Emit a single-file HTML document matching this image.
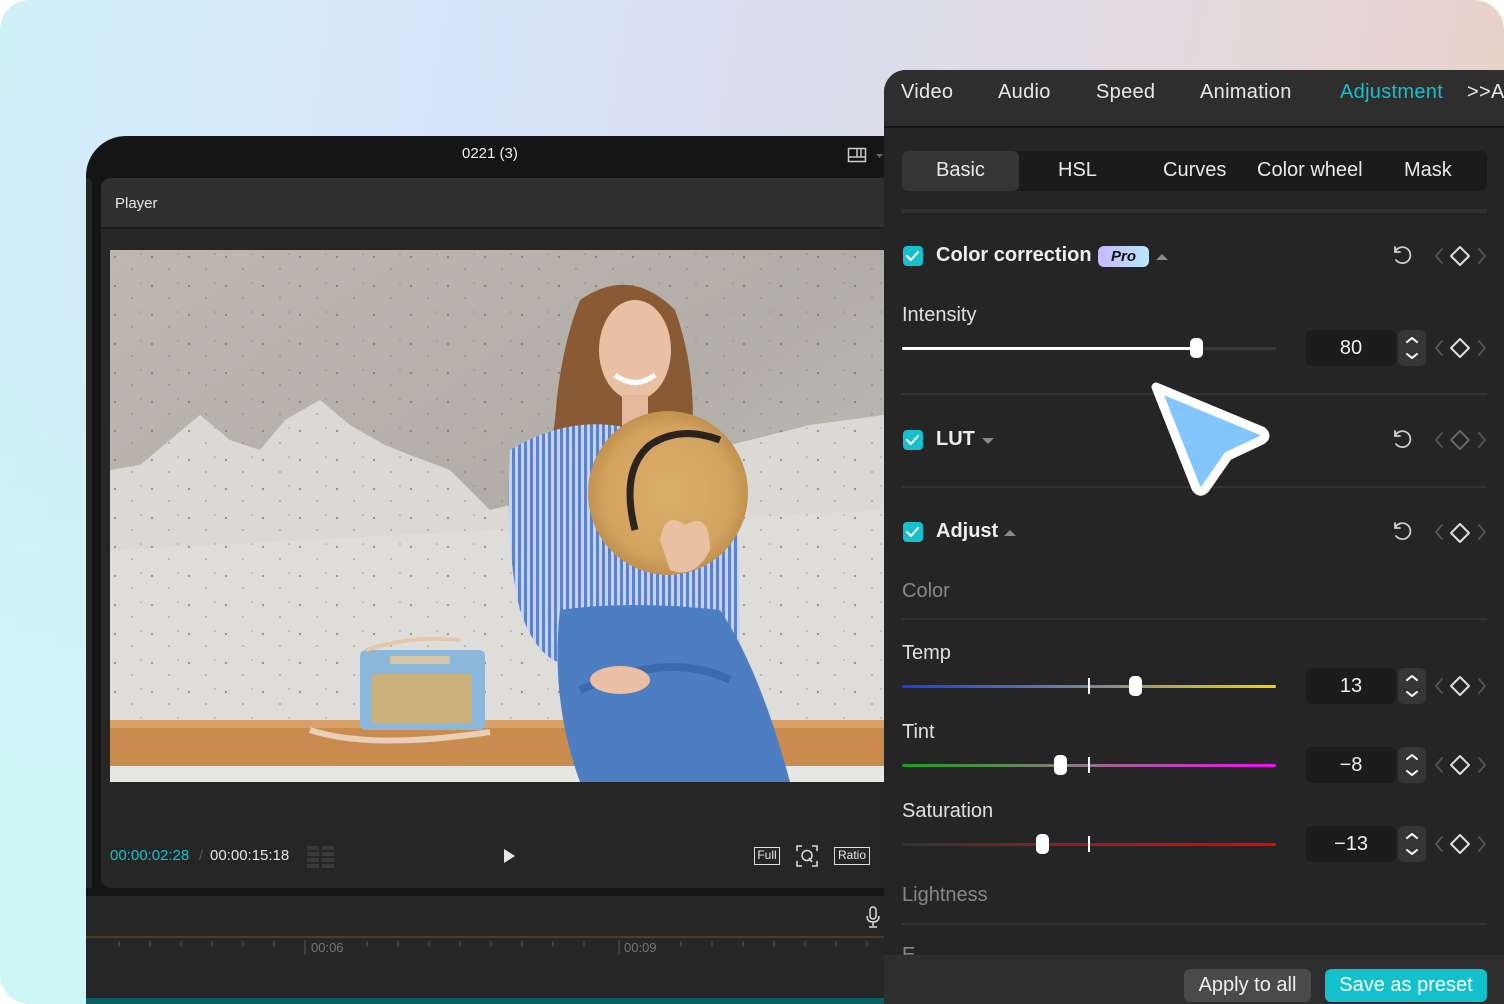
<!DOCTYPE html>
<html><head><meta charset="utf-8"><style>
*{margin:0;padding:0;box-sizing:border-box}
body{width:1504px;height:1004px;background:#fff;overflow:hidden;font-family:"Liberation Sans","DejaVu Sans",sans-serif;position:relative}
.a{position:absolute}
.bg{left:0;top:0;width:1504px;height:1004px;border-radius:30px;background:linear-gradient(100deg,#d0f0f8 0%,#d6e4fb 28%,#dcdce9 55%,#e6d6d6 80%,#ecccbd 100%);overflow:hidden}
.bg2{left:0;top:300px;width:600px;height:704px;background:linear-gradient(to bottom,rgba(205,245,247,0) 0%,rgba(205,246,247,1) 70%)}
.t{color:#e8e8e8;white-space:nowrap}
.tab{font-size:20px;letter-spacing:0.3px}
.lbl{font-size:20px;color:#e0e0e0}
.val{width:90px;height:36px;background:#1c1c1c;border-radius:6px;color:#eee;font-size:20px;text-align:center;line-height:36px}
.spin{width:28px;height:36px;background:#363636;border-radius:6px}
.track{height:3px;border-radius:2px}
.thumb{width:13px;height:20px;background:#fff;border-radius:5px}
.div{height:2px;background:#333;left:902px;width:585px}
.cb{width:20px;height:20px;background:#16c0cc;border-radius:4px}
</style></head><body>
<div class="a bg"><div class="a bg2"></div></div>

<div class="a" style="left:86px;top:136px;width:820px;height:868px;background:#151515;border-top-left-radius:40px"></div>
<div class="a t" style="left:462px;top:145px;font-size:15px;color:#f0f0f0">0221 (3)</div>
<svg class="a" style="left:847px;top:147px" width="40" height="16"><rect x="1.5" y="1.5" width="17" height="13" fill="none" stroke="#ccc" stroke-width="1.5"/><line x1="1.5" y1="10" x2="18.5" y2="10" stroke="#ccc" stroke-width="1.5"/><line x1="10" y1="1.5" x2="10" y2="10" stroke="#ccc" stroke-width="1.5"/><line x1="14" y1="1.5" x2="14" y2="10" stroke="#ccc" stroke-width="1.5"/><path d="M29 7h7l-3.5 4z" fill="#666"/></svg>
<div class="a" style="left:86px;top:178px;width:6px;height:710px;background:#262626;border-top-right-radius:6px"></div>
<div class="a" style="left:101px;top:178px;width:800px;height:710px;background:#262626;border-radius:10px 0 0 10px"></div>
<div class="a" style="left:101px;top:178px;width:800px;height:51px;background:#303030;border-top-left-radius:10px;border-bottom:2px solid #1c1c1c"></div>
<div class="a t" style="left:115px;top:195px;font-size:15px">Player</div>

<svg class="a" style="left:110px;top:250px" width="774" height="532" viewBox="0 0 774 532">
<defs>
<linearGradient id="wall" x1="0" y1="0" x2="1" y2="1"><stop offset="0" stop-color="#bdb8b0"/><stop offset="0.5" stop-color="#b2aea7"/><stop offset="1" stop-color="#c8c6c2"/></linearGradient>
<pattern id="str" width="6" height="10" patternUnits="userSpaceOnUse"><rect width="6" height="10" fill="#c7d3ec"/><rect width="3" height="10" fill="#5d82c8"/></pattern>
<radialGradient id="hat"><stop offset="0" stop-color="#dcae6b"/><stop offset="0.8" stop-color="#d2a35f"/><stop offset="1" stop-color="#c1914f"/></radialGradient>
<pattern id="spk" width="37" height="29" patternUnits="userSpaceOnUse"><circle cx="5" cy="7" r="1.2" fill="#6a6660"/><circle cx="22" cy="19" r="0.9" fill="#77726b"/><circle cx="31" cy="4" r="0.8" fill="#7d7870"/></pattern>
</defs>
<rect width="774" height="532" fill="url(#wall)"/>
<path d="M0 220 L30 215 L90 165 L120 190 L150 200 L175 170 L210 150 L240 175 L275 195 L300 205 L340 220 L380 260 L460 240 L560 210 L640 190 L700 175 L774 165 L774 470 L0 470Z" fill="#dad9d5"/>
<path d="M0 300 L774 260 L774 470 L0 470Z" fill="#e1e0dd" opacity="0.6"/>
<rect width="774" height="470" fill="url(#spk)" opacity="0.6"/>
<rect y="470" width="774" height="46" fill="#c98c4e"/>
<rect y="470" width="774" height="8" fill="#d9a167"/>
<rect y="516" width="774" height="16" fill="#e6e6e4"/>
<path d="M470 50 Q520 15 565 60 Q590 130 580 210 L600 280 L560 300 L470 300 Q430 260 445 170 Q450 100 470 50Z" fill="#8a5a34"/>
<path d="M400 200 Q450 170 500 175 L580 185 Q620 210 628 280 L630 400 Q560 420 470 415 Q430 420 410 360 Q395 300 400 200Z" fill="url(#str)"/>
<ellipse cx="525" cy="100" rx="36" ry="50" fill="#e9c0a4"/>
<path d="M505 125 Q525 140 545 125" stroke="#fff" stroke-width="5" fill="none"/>
<rect x="512" y="145" width="26" height="35" fill="#e4b89a"/>
<path d="M450 360 Q520 350 610 360 Q650 420 680 532 L470 532 Q440 450 450 360Z" fill="#4d7ec2"/>
<path d="M470 440 Q560 400 620 430" stroke="#3b6aae" stroke-width="8" fill="none"/>
<ellipse cx="510" cy="430" rx="30" ry="14" fill="#e9c0a4"/>
<ellipse cx="558" cy="243" rx="80" ry="82" fill="url(#hat)"/>
<path d="M525 280 Q510 220 540 195 Q570 175 610 190" stroke="#2a2320" stroke-width="7" fill="none"/>
<path d="M550 290 Q555 260 575 275 Q600 260 600 300 Q585 330 560 320Z" fill="#eac0a2"/>
<rect x="250" y="400" width="125" height="80" rx="6" fill="#8bb7db"/>
<rect x="262" y="424" width="100" height="50" rx="4" fill="#ccb07a"/>
<rect x="280" y="406" width="60" height="8" fill="#d7c7a7"/>
<path d="M256 400 Q300 385 350 390" stroke="#e6c8a8" stroke-width="4" fill="none"/>
<path d="M200 480 Q260 500 380 482" stroke="#e8cfb5" stroke-width="6" fill="none"/>
</svg>

<div class="a t" style="left:110px;top:847px;font-size:15px;color:#16c0cc">00:00:02:28</div>
<div class="a t" style="left:199px;top:847px;font-size:15px;color:#555">/</div>
<div class="a t" style="left:210px;top:847px;font-size:15px;color:#e6e6e6">00:00:15:18</div>
<svg class="a" style="left:307px;top:846px" width="28" height="22"><g fill="#3a3a3a"><rect x="0" y="0" width="12" height="4"/><rect x="0" y="6" width="12" height="4"/><rect x="0" y="12" width="12" height="4"/><rect x="0" y="18" width="12" height="4"/><rect x="15" y="0" width="12" height="4"/><rect x="15" y="6" width="12" height="4"/><rect x="15" y="12" width="12" height="4"/><rect x="15" y="18" width="12" height="4"/></g></svg>
<svg class="a" style="left:503px;top:848px" width="14" height="16"><path d="M1 1L12 8L1 15Z" fill="#e6e6e6"/></svg>
<div class="a t" style="left:754px;top:847px;width:26px;height:18px;border:1.5px solid #ddd;font-size:12px;text-align:center;line-height:15px">Full</div>
<svg class="a" style="left:796px;top:845px" width="22" height="22" fill="none" stroke="#ddd" stroke-width="1.5"><path d="M1 6V1h5M16 1h5v5M21 16v5h-5M6 21H1v-5"/><circle cx="11" cy="10.5" r="5"/><path d="M13 13l3 4"/></svg>
<div class="a t" style="left:834px;top:847px;width:36px;height:18px;border:1.5px solid #ddd;font-size:12px;text-align:center;line-height:15px">Ratio</div>

<div class="a" style="left:86px;top:896px;width:800px;height:108px;background:#262626"></div>
<svg class="a" style="left:864px;top:906px" width="18" height="22" fill="none" stroke="#ddd" stroke-width="1.5"><rect x="6" y="1" width="6" height="12" rx="3"/><path d="M3 10q0 6 6 6q6 0 6-6M9 16v4M5 21h8"/></svg>
<div class="a" style="left:86px;top:936px;width:800px;height:2px;background:#4a3f1a"></div>
<svg class="a" style="left:86px;top:938px" width="800" height="20"><g stroke="#555" stroke-width="1"><line x1="33" y1="3" x2="33" y2="9"/><line x1="64" y1="3" x2="64" y2="9"/><line x1="95" y1="3" x2="95" y2="9"/><line x1="126" y1="3" x2="126" y2="9"/><line x1="157" y1="3" x2="157" y2="9"/><line x1="188" y1="3" x2="188" y2="9"/><line x1="281" y1="3" x2="281" y2="9"/><line x1="312" y1="3" x2="312" y2="9"/><line x1="343" y1="3" x2="343" y2="9"/><line x1="374" y1="3" x2="374" y2="9"/><line x1="405" y1="3" x2="405" y2="9"/><line x1="436" y1="3" x2="436" y2="9"/><line x1="467" y1="3" x2="467" y2="9"/><line x1="498" y1="3" x2="498" y2="9"/><line x1="595" y1="3" x2="595" y2="9"/><line x1="626" y1="3" x2="626" y2="9"/><line x1="657" y1="3" x2="657" y2="9"/><line x1="688" y1="3" x2="688" y2="9"/><line x1="719" y1="3" x2="719" y2="9"/><line x1="750" y1="3" x2="750" y2="9"/><line x1="781" y1="3" x2="781" y2="9"/><line x1="219" y1="2" x2="219" y2="17"/><line x1="533" y1="2" x2="533" y2="17"/></g></svg>
<div class="a t" style="left:311px;top:940px;font-size:13px;color:#777">00:06</div>
<div class="a t" style="left:624px;top:940px;font-size:13px;color:#777">00:09</div>
<div class="a" style="left:86px;top:998px;width:800px;height:6px;background:#0d5f63"></div>

<div class="a" style="left:884px;top:70px;width:620px;height:934px;background:#252525;border-top-left-radius:22px;overflow:hidden">
 <div class="a" style="left:0;top:0;width:620px;height:58px;background:#2e2e2e;border-bottom:2px solid #141414"></div>
</div>
<div class="a t tab" style="left:901px;top:81px">Video</div>
<div class="a t tab" style="left:998px;top:81px">Audio</div>
<div class="a t tab" style="left:1096px;top:81px">Speed</div>
<div class="a t tab" style="left:1200px;top:81px">Animation</div>
<div class="a t tab" style="left:1340px;top:81px;color:#16c0cc">Adjustment</div>
<div class="a t tab" style="left:1467px;top:81px">&gt;&gt;A</div>

<div class="a" style="left:902px;top:151px;width:585px;height:40px;background:#1b1b1b;border-radius:6px"></div>
<div class="a" style="left:902px;top:151px;width:117px;height:40px;background:#353535;border-radius:6px"></div>
<div class="a t" style="left:936px;top:159px;font-size:20px">Basic</div>
<div class="a t" style="left:1058px;top:159px;font-size:20px">HSL</div>
<div class="a t" style="left:1163px;top:159px;font-size:20px">Curves</div>
<div class="a t" style="left:1257px;top:159px;font-size:20px">Color wheel</div>
<div class="a t" style="left:1404px;top:159px;font-size:20px">Mask</div>
<div class="a div" style="top:209px;height:4px;background:#303030"></div>

<div class="a cb" style="left:903px;top:246px"></div>
<div class="a t" style="left:936px;top:244px;font-size:20px;font-weight:bold;color:#eee">Color correction</div>
<div class="a" style="left:1098px;top:246px;width:51px;height:21px;border-radius:6px;background:linear-gradient(90deg,#c8b8ff,#b8e8ff);color:#111;font-weight:bold;font-size:15px;text-align:center;line-height:21px;font-style:italic">Pro</div>
<div class="a cb" style="left:903px;top:430px"></div>
<div class="a t" style="left:936px;top:428px;font-size:20px;font-weight:bold;color:#eee">LUT</div>
<div class="a cb" style="left:903px;top:522px"></div>
<div class="a t" style="left:936px;top:520px;font-size:20px;font-weight:bold;color:#eee">Adjust</div>
<svg class="a" style="left:0;top:0" width="1504" height="1004">
<g fill="#888"><path d="M1156 260h12l-6-6z"/><path d="M982 438h12l-6 6z"/><path d="M1004 536h12l-6-6z"/></g>
<g fill="none" stroke-linecap="round" stroke-linejoin="round">
<path d="M907 256l4 4l7-8" stroke="#fff" stroke-width="2"/>
<path d="M907 440l4 4l7-8" stroke="#fff" stroke-width="2"/>
<path d="M907 532l4 4l7-8" stroke="#fff" stroke-width="2"/>
</g>
<g fill="none" stroke="#ccc" stroke-width="1.8" stroke-linecap="round">
<path d="M1395 252a8 8 0 1 1 1 8M1395 247v5h5"/>
<path d="M1395 436a8 8 0 1 1 1 8M1395 431v5h5"/>
<path d="M1395 528a8 8 0 1 1 1 8M1395 523v5h5"/>
</g>
</svg>

<svg class="a" style="left:0;top:0" width="1504" height="1004" fill="none" stroke-linecap="round" stroke-linejoin="round">
<g stroke="#555" stroke-width="1.8"><path d="M1442 249l-6 7l6 7M1479 249l6 7l-6 7"/><path d="M1442 341l-6 7l6 7M1479 341l6 7l-6 7"/><path d="M1442 433l-6 7l6 7M1479 433l6 7l-6 7"/><path d="M1442 525l-6 7l6 7M1479 525l6 7l-6 7"/><path d="M1442 679l-6 7l6 7M1479 679l6 7l-6 7"/><path d="M1442 758l-6 7l6 7M1479 758l6 7l-6 7"/><path d="M1442 837l-6 7l6 7M1479 837l6 7l-6 7"/></g>
<g stroke="#ddd" stroke-width="2"><path d="M1460 247l9 9l-9 9l-9-9z"/><path d="M1460 339l9 9l-9 9l-9-9z"/><path d="M1460 524l9 9l-9 9l-9-9z"/><path d="M1460 677l9 9l-9 9l-9-9z"/><path d="M1460 756l9 9l-9 9l-9-9z"/><path d="M1460 835l9 9l-9 9l-9-9z"/></g>
<path d="M1460 431l9 9l-9 9l-9-9z" stroke="#666" stroke-width="2"/>
</svg>

<div class="a lbl" style="left:902px;top:304px">Intensity</div>
<div class="a track" style="left:902px;top:347px;width:374px;background:#3a3a3a"></div>
<div class="a track" style="left:902px;top:347px;width:295px;background:#fff"></div>
<div class="a thumb" style="left:1190px;top:338px"></div>
<div class="a val" style="left:1306px;top:330px">80</div>
<div class="a spin" style="left:1398px;top:330px"></div>
<div class="a div" style="top:393px"></div>
<div class="a div" style="top:486px"></div>

<div class="a lbl" style="left:902px;top:580px;color:#888">Color</div>
<div class="a div" style="top:618px"></div>

<div class="a lbl" style="left:902px;top:642px">Temp</div>
<div class="a track" style="left:902px;top:685px;width:374px;background:linear-gradient(90deg,#1a3cf0,#7b8597 50%,#f2d600)"></div>
<div class="a" style="left:1088px;top:678px;width:2px;height:16px;background:#fff"></div>
<div class="a thumb" style="left:1129px;top:676px"></div>
<div class="a val" style="left:1306px;top:668px">13</div>
<div class="a spin" style="left:1398px;top:668px"></div>

<div class="a lbl" style="left:902px;top:721px">Tint</div>
<div class="a track" style="left:902px;top:764px;width:374px;background:linear-gradient(90deg,#1ca01c,#8a7a80 45%,#f010f0)"></div>
<div class="a" style="left:1088px;top:757px;width:2px;height:16px;background:#fff"></div>
<div class="a thumb" style="left:1054px;top:755px"></div>
<div class="a val" style="left:1306px;top:747px">−8</div>
<div class="a spin" style="left:1398px;top:747px"></div>

<div class="a lbl" style="left:902px;top:800px">Saturation</div>
<div class="a track" style="left:902px;top:843px;width:374px;background:linear-gradient(90deg,#333,#8a2020 40%,#f00000)"></div>
<div class="a" style="left:1088px;top:836px;width:2px;height:16px;background:#fff"></div>
<div class="a thumb" style="left:1036px;top:834px"></div>
<div class="a val" style="left:1306px;top:826px">−13</div>
<div class="a spin" style="left:1398px;top:826px"></div>

<svg class="a" style="left:0;top:0" width="1504" height="1004" fill="none" stroke="#fff" stroke-width="2" stroke-linecap="round" stroke-linejoin="round">
<path d="M1407 342l5-4l5 4M1407 354l5 4l5-4"/>
<path d="M1407 680l5-4l5 4M1407 692l5 4l5-4"/>
<path d="M1407 759l5-4l5 4M1407 771l5 4l5-4"/>
<path d="M1407 838l5-4l5 4M1407 850l5 4l5-4"/>
</svg>

<div class="a lbl" style="left:902px;top:884px;color:#888">Lightness</div>
<div class="a div" style="top:923px"></div>
<div class="a lbl" style="left:902px;top:944px;color:#888">E</div>

<div class="a" style="left:884px;top:955px;width:620px;height:49px;background:#2e2e2e"></div>
<div class="a t" style="left:1184px;top:969px;width:127px;height:33px;background:#4a4a4a;border-radius:6px;font-size:20px;text-align:center;line-height:32px;color:#eee">Apply to all</div>
<div class="a t" style="left:1325px;top:969px;width:162px;height:33px;background:#12c1cc;border-radius:6px;font-size:20px;text-align:center;line-height:32px;color:#fff">Save as preset</div>

<svg class="a" style="left:0;top:0" width="1504" height="1004"><path d="M1156 387L1262 431Q1268 436 1262 440L1228 456L1205 489Q1200 494 1196 488Z" fill="#83c5fd" stroke="#fff" stroke-width="9" stroke-linejoin="round"/></svg>
</body></html>
